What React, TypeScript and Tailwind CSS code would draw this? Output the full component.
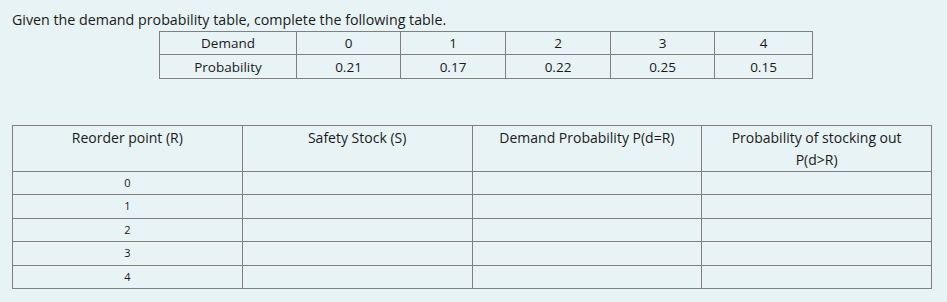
const demand = [
  { d: "0", p: "0.21" },
  { d: "1", p: "0.17" },
  { d: "2", p: "0.22" },
  { d: "3", p: "0.25" },
  { d: "4", p: "0.15" },
];

const colWidths = [104, 105, 105, 104, 98];

export default function App() {
  return (
    <div
      className="w-[947px] h-[302px] bg-[#e8f3f5] text-[#1a1a1a] pt-[10px] pl-[12px]"
      style={{ fontFamily: '"Segoe UI", "Open Sans", sans-serif' }}
    >
      <p className="text-[14.25px] leading-[20px]">
        Given the demand probability table, complete the following table.
      </p>

      {/* demand distribution */}
      <table className="ml-[147px] mt-[1px] w-[654px] table-fixed border-collapse text-[13.5px] text-center">
        <colgroup>
          <col className="w-[137px]" />
          {colWidths.map((w, i) => (
            <col key={i} style={{ width: w }} />
          ))}
        </colgroup>
        <tbody>
          <tr className="h-[23px]">
            <td className="border border-[#808080] p-0 leading-[20px]">Demand</td>
            {demand.map((c) => (
              <td key={c.d} className="border border-[#808080] p-0 leading-[20px]">
                {c.d}
              </td>
            ))}
          </tr>
          <tr className="h-[24px]">
            <td className="border border-[#808080] p-0 leading-[20px]">Probability</td>
            {demand.map((c) => (
              <td key={c.d} className="border border-[#808080] p-0 leading-[20px]">
                {c.p}
              </td>
            ))}
          </tr>
        </tbody>
      </table>

      {/* answer sheet */}
      <table className="mt-[46px] w-[920px] table-fixed border-collapse text-center">
        <thead>
          <tr className="h-[46px]">
            {[
              "Reorder point (R)",
              "Safety Stock (S)",
              "Demand Probability P(d=R)",
            ].map((h) => (
              <th
                key={h}
                className="border border-[#808080] align-top font-normal text-[14px] leading-[22px] p-0 pt-[1px]"
              >
                {h}
              </th>
            ))}
            <th className="border border-[#808080] align-top font-normal text-[14px] leading-[22px] p-0 pt-[1px]">
              Probability of stocking out
              <br />
              P(d&gt;R)
            </th>
          </tr>
        </thead>
        <tbody>
          {["0", "1", "2", "3", "4"].map((r, i) => (
            <tr key={r} className={i % 2 === 0 ? "h-[23px]" : "h-[24px]"}>
              <td className="border border-[#808080] p-0 text-[11px]">{r}</td>
              <td className="border border-[#808080] p-0" />
              <td className="border border-[#808080] p-0" />
              <td className="border border-[#808080] p-0" />
            </tr>
          ))}
        </tbody>
      </table>
    </div>
  );
}
